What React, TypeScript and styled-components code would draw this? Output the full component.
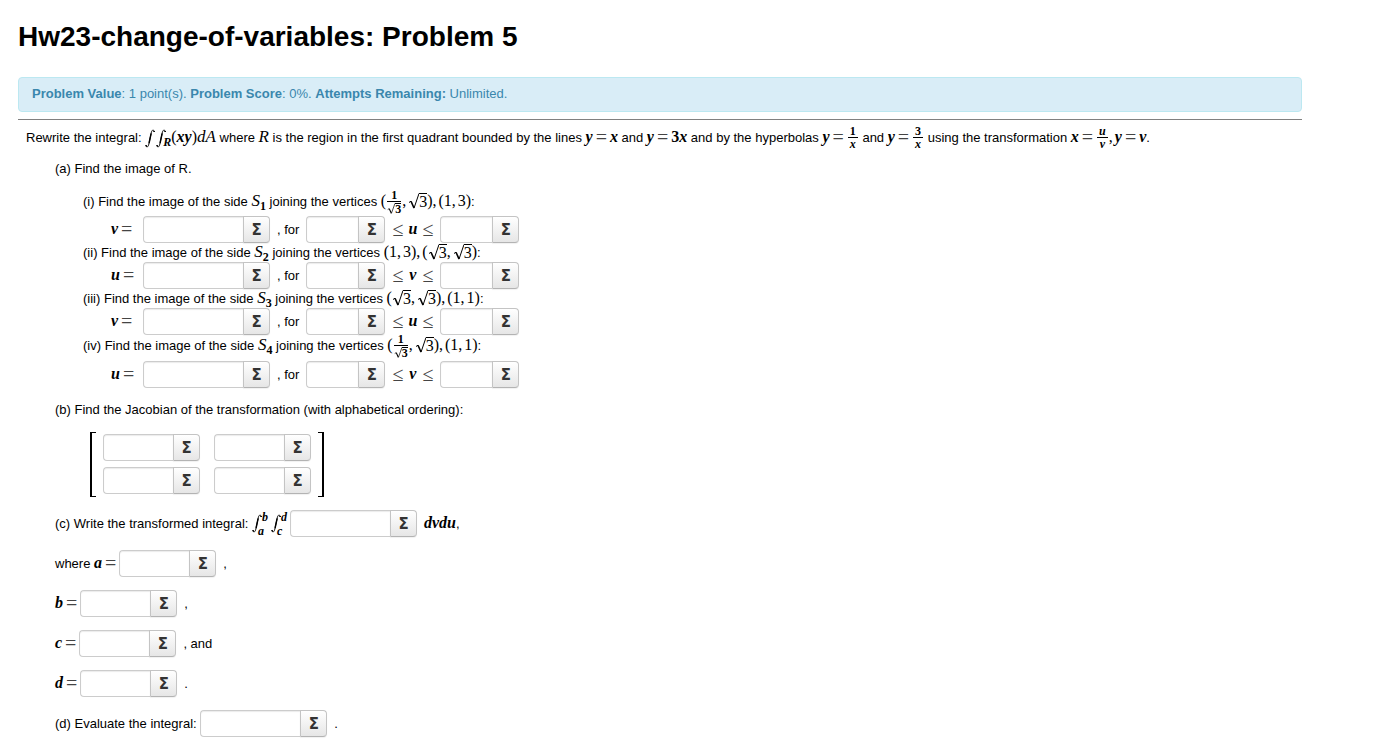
import React from "react";
import styled, { createGlobalStyle } from "styled-components";

const GlobalStyle = createGlobalStyle`
  * { box-sizing: border-box; }
  body {
    margin: 0;
    background: #fff;
    color: #000;
    font-family: "Liberation Sans", Arial, sans-serif;
    font-size: 13px;
    line-height: 20px;
  }
`;

const Page = styled.main`
  margin: 0 75px 0 18px;
  padding-bottom: 9px;
`;

const Title = styled.h1`
  margin: 0;
  padding: 17px 0 20px;
  font-size: 28px;
  line-height: 40px;
`;

const Alert = styled.p`
  margin: 0;
  padding: 6px 13px 7px;
  border: 1px solid #bce8f1;
  border-radius: 4px;
  background: #d9edf7;
  color: #3a87ad;
`;

const Rule = styled.hr`
  margin: 7px 0 0;
  border: 0;
  border-top: 1px solid #808080;
`;

const Statement = styled.p`
  margin: 0;
  padding: 6px 8px;
`;

const Part = styled.section`
  padding-left: 37px;
`;

const Line = styled.div<{ $height?: number; $bottom?: number }>`
  display: flex;
  align-items: center;
  height: ${(p) => p.$height ?? 27}px;
  padding-bottom: ${(p) => p.$bottom ?? 0}px;
  white-space: pre;
`;

const Sides = styled.div`
  padding: 6px 0 0 28px;
`;

const AnswerLine = styled(Line)`
  gap: 7px;
  padding-left: 28px;
`;

const Answers = styled.div`
  display: flex;
  flex-direction: column;
  gap: 13px;
  padding: 13px 0 0 37px;
`;

const Lead = styled.label<{ $width?: number }>`
  ${(p) => (p.$width ? `width: ${p.$width}px;` : "")}
  white-space: pre;
`;

const After = styled.span`
  padding-left: 7px;
`;

const MathText = styled.span`
  font-family: "Liberation Serif", "Times New Roman", serif;
  font-size: 16px;
  line-height: 1;
  white-space: nowrap;
`;

const Var = styled.i`
  font-weight: 700;
  font-size: 16px;
`;

const Cap = styled.i`
  font-size: 17px;
`;

const Rel = styled.span`
  margin: 0 3px;
  color: #444;
  font-size: 20px;
  line-height: 14px;
  vertical-align: -2px;
`;

const Bounds = styled(MathText)`
  display: flex;
  justify-content: space-between;
  align-items: center;
  width: 41px;
  padding-bottom: 2px;

  ${Rel} {
    margin: 0;
  }
`;

const Comma = styled.span`
  margin-right: 2px;
`;

const Sub = styled.span`
  position: relative;
  top: 4px;
  font-size: 12px;
  font-weight: 700;
  line-height: 1;
`;

const FracBox = styled.span`
  display: inline-flex;
  flex-direction: column;
  align-items: stretch;
  margin: 0 1px;
  vertical-align: middle;
  text-align: center;
  font-size: 12px;
  font-weight: 700;
  line-height: 11px;
`;

const Over = styled.span`
  padding: 0 2px;
  border-bottom: 1px solid #000;
`;

const Under = styled.span`
  padding-top: 1px;
`;

const RootBox = styled.span<{ $small?: boolean }>`
  display: inline-flex;
  align-items: stretch;
  height: ${(p) => (p.$small ? 11 : 16)}px;
  line-height: ${(p) => (p.$small ? 11 : 16)}px;
  vertical-align: ${(p) => (p.$small ? "top" : "-3px")};

  svg {
    width: ${(p) => (p.$small ? 8 : 11)}px;
    height: 100%;
  }
  span {
    border-top: 1px solid #000;
  }
`;

const IntBox = styled.span`
  display: inline-flex;
  align-items: center;
  height: 20px;
  margin-right: 1px;
  vertical-align: middle;

  svg {
    width: 10px;
    height: 19px;
  }

  & + ${Sub} {
    margin-left: -4px;
  }
`;

const Limits = styled.span`
  display: inline-flex;
  flex-direction: column;
  justify-content: space-between;
  height: 26px;
  margin: 0 3px 0 -5px;
  font-size: 12px;
  font-style: italic;
  font-weight: 700;
  line-height: 12px;

  span:first-child {
    padding-left: 4px;
  }
`;

const Group = styled.span`
  display: inline-flex;
  flex: none;
  align-items: center;
`;

const Input = styled.input<{ $width: number }>`
  width: ${(p) => p.$width}px;
  height: 27px;
  margin: 0;
  padding: 3px 5px;
  border: 1px solid #ccc;
  border-right: 0;
  border-radius: 4px 0 0 4px;
  background: #fff;
  box-shadow: inset 0 1px 1px rgba(0, 0, 0, 0.08);
  color: #555;
  font: inherit;
  outline: 0;
`;

const Sigma = styled.button`
  width: 27px;
  height: 27px;
  margin: 0;
  padding: 0;
  border: 1px solid #c4c4c4;
  border-bottom-color: #b3b3b3;
  border-radius: 0 4px 4px 0;
  background: linear-gradient(#fff, #e6e6e6);
  box-shadow: 0 1px 1px rgba(0, 0, 0, 0.06);
  color: #333;
  font-family: "DejaVu Sans", sans-serif;
  font-size: 15px;
  font-weight: 700;
  line-height: 24px;
`;

const Matrix = styled.div`
  display: flex;
  width: max-content;
  margin-left: 35px;
  gap: 7px;
`;

const Bracket = styled.span<{ $right?: boolean }>`
  width: 6px;
  border: solid #000;
  border-width: ${(p) => (p.$right ? "1px 2px 1px 0" : "1px 0 1px 2px")};
`;

const Cells = styled.div`
  display: grid;
  grid-template-columns: auto auto;
  gap: 6px 14px;
  padding: 2px 0 3px;
`;

const V = ({ children }: { children: string }) => (
  <MathText>
    <Var>{children}</Var>
  </MathText>
);

const Eq = () => (
  <MathText>
    <Rel>=</Rel>
  </MathText>
);

const Frac = ({ top, bottom }: { top: React.ReactNode; bottom: React.ReactNode }) => (
  <MathText>
    <FracBox>
      <Over>{top}</Over>
      <Under>{bottom}</Under>
    </FracBox>
  </MathText>
);

const Root = ({ small }: { small?: boolean }) => (
  <RootBox $small={small}>
    <svg viewBox="0 0 11 16" preserveAspectRatio="none" fill="none" stroke="#000">
      <path d="M1 9.5 3 8.2" strokeWidth="1" />
      <path d="M3 8.2 6 15" strokeWidth="1.6" />
      <path d="M6 15.2 11 .5" strokeWidth="1" />
    </svg>
    <span>3</span>
  </RootBox>
);

const Integral = () => (
  <IntBox role="img" aria-label="integral">
    <svg viewBox="0 0 10 19" fill="none" stroke="#000" strokeLinecap="round">
      <path d="M9.3 2.4C8.8 .5 7.1 .5 6.4 3.2L3.8 15.2C3.2 18.2 1.6 18.8 .8 16.9" strokeWidth="1" />
      <path d="M6 5 4.2 13.5" strokeWidth="1.4" />
      <circle cx="9" cy="2.4" r=".3" />
      <circle cx="1.1" cy="16.8" r=".3" />
    </svg>
  </IntBox>
);

const Field = ({ id, width, label }: { id: string; width: number; label: string }) => (
  <Group>
    <Input id={id} type="text" $width={width} aria-label={label} />
    <Sigma type="button" aria-label={`Equation editor for ${label}`}>
      Σ
    </Sigma>
  </Group>
);

const Pair = ({ a, b }: { a: React.ReactNode; b: React.ReactNode }) => (
  <MathText>
    ({a}
    <Comma>,</Comma>
    {b})
  </MathText>
);

const Pairs = ({ children }: { children: [React.ReactNode, React.ReactNode] }) => (
  <MathText>
    {children[0]}
    <Comma>,</Comma>
    {children[1]}
  </MathText>
);

interface SideProps {
  numeral: string;
  index: number;
  result: string;
  bound: string;
  height: number;
  bottom?: number;
  children: [React.ReactNode, React.ReactNode];
}

const Side = ({ numeral, index, result, bound, height, bottom, children }: SideProps) => (
  <>
    <Line $height={height} $bottom={bottom}>
      <span>
        ({numeral}) Find the image of the side{" "}
        <MathText>
          <Cap>S</Cap>
          <Sub>{index}</Sub>
        </MathText>{" "}
        joining the vertices <Pairs>{children}</Pairs>:
      </span>
    </Line>
    <AnswerLine>
      <Lead htmlFor={`side${index}`} $width={25}>
        <V>{result}</V>
        <Eq />
      </Lead>
      <Field id={`side${index}`} width={100} label={`${result}, side ${index}`} />
      <span>, for</span>
      <Field id={`low${index}`} width={52} label={`lower bound, side ${index}`} />
      <Bounds>
        <Rel>≤</Rel>
        <Var>{bound}</Var>
        <Rel>≤</Rel>
      </Bounds>
      <Field id={`high${index}`} width={52} label={`upper bound, side ${index}`} />
    </AnswerLine>
  </>
);

const thirdRoot = <Frac top="1" bottom={<Root small />} />;

const limits = [
  { name: "a", before: "where ", after: "," },
  { name: "b", before: "", after: "," },
  { name: "c", before: "", after: ", and" },
  { name: "d", before: "", after: "." },
];

export default function App() {
  return (
    <Page>
      <GlobalStyle />
      <Title>Hw23-change-of-variables: Problem 5</Title>
      <Alert>
        <b>Problem Value</b>: 1 point(s). <b>Problem Score</b>: 0%. <b>Attempts Remaining:</b> Unlimited.
      </Alert>
      <Rule />
      <Statement>
        Rewrite the integral:{" "}
        <MathText>
          <Integral />
          <Integral />
          <Sub>
            <i>R</i>
          </Sub>
          (<Var>xy</Var>)<Cap>dA</Cap>
        </MathText>{" "}
        where{" "}
        <MathText>
          <Cap>R</Cap>
        </MathText>{" "}
        is the region in the first quadrant bounded by the lines <V>y</V>
        <Eq />
        <V>x</V> and <V>y</V>
        <Eq />
        <MathText>
          <b>3</b>
        </MathText>
        <V>x</V> and by the hyperbolas <V>y</V>
        <Eq />
        <Frac top="1" bottom={<i>x</i>} /> and <V>y</V>
        <Eq />
        <Frac top="3" bottom={<i>x</i>} /> using the transformation <V>x</V>
        <Eq />
        <Frac top={<i>u</i>} bottom={<i>v</i>} />
        <MathText>
          <Comma>,</Comma>
        </MathText>
        <V>y</V>
        <Eq />
        <V>v</V>.
      </Statement>

      <Part>
        <Line $height={26}>(a) Find the image of R.</Line>
        <Sides>
          <Side numeral="i" index={1} result="v" bound="u" height={28}>
            <Pair a={thirdRoot} b={<Root />} />
            <Pair a="1" b="3" />
          </Side>
          <Side numeral="ii" index={2} result="u" bound="v" height={19}>
            <Pair a="1" b="3" />
            <Pair a={<Root />} b={<Root />} />
          </Side>
          <Side numeral="iii" index={3} result="v" bound="u" height={19}>
            <Pair a={<Root />} b={<Root />} />
            <Pair a="1" b="1" />
          </Side>
          <Side numeral="iv" index={4} result="u" bound="v" height={26} bottom={4}>
            <Pair a={thirdRoot} b={<Root />} />
            <Pair a="1" b="1" />
          </Side>
        </Sides>
        <Line $height={44}>(b) Find the Jacobian of the transformation (with alphabetical ordering):</Line>
        <Matrix>
          <Bracket />
          <Cells>
            <Field id="j11" width={70} label="row 1, column 1" />
            <Field id="j12" width={70} label="row 1, column 2" />
            <Field id="j21" width={70} label="row 2, column 1" />
            <Field id="j22" width={70} label="row 2, column 2" />
          </Cells>
          <Bracket $right />
        </Matrix>
      </Part>

      <Answers>
        <Line>
          <Lead htmlFor="integrand">(c) Write the transformed integral: </Lead>
          <Group>
            <MathText>
              <Group>
                <Integral />
                <Limits>
                  <span>b</span>
                  <span>a</span>
                </Limits>
              </Group>
              <Group>
                <Integral />
                <Limits>
                  <span>d</span>
                  <span>c</span>
                </Limits>
              </Group>
            </MathText>
          </Group>
          <Field id="integrand" width={100} label="integrand" />
          <After>
            <V>dvdu</V>,
          </After>
        </Line>
        {limits.map(({ name, before, after }) => (
          <Line key={name}>
            <Lead htmlFor={name}>
              {before}
              <V>{name}</V>
              <Eq />
            </Lead>
            <Field id={name} width={70} label={name} />
            <After>{after}</After>
          </Line>
        ))}
        <Line>
          <Lead htmlFor="value">(d) Evaluate the integral: </Lead>
          <Field id="value" width={100} label="value of the integral" />
          <After>.</After>
        </Line>
      </Answers>
    </Page>
  );
}
